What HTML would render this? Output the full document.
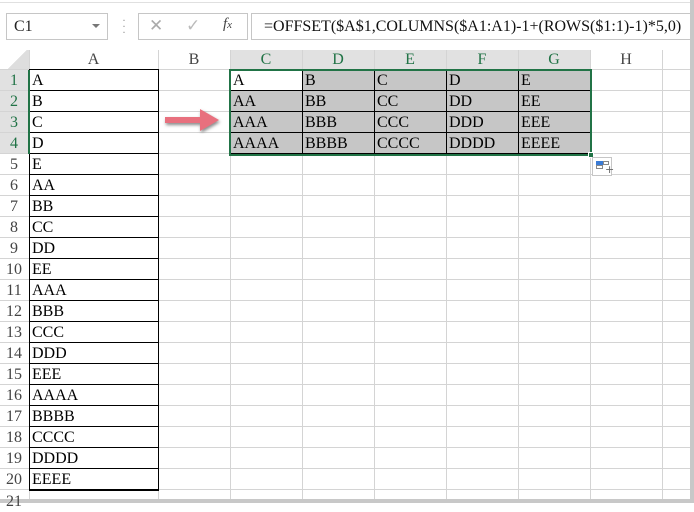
<!DOCTYPE html><html><head><style>
*{margin:0;padding:0;box-sizing:border-box}
body{width:694px;height:503px;background:#fff;position:relative;overflow:hidden;font-family:"Liberation Serif",serif;}
.a{position:absolute}
.v{position:absolute;top:50px;width:1px;height:451px;background:#d4d4d4}
.t{position:absolute;font-size:16px;color:#000;line-height:21px}
.rn{position:absolute;left:0;width:28px;text-align:center;font-size:16px;line-height:21px;color:#444}
.ch{position:absolute;top:50px;height:20px;line-height:20px;text-align:center;font-size:16px;color:#444}
</style></head><body>
<div class="a" style="left:0;top:0;width:694px;height:3px;border-bottom:1px solid #e0e0e0"></div>
<div class="a" style="left:6px;top:13px;width:102px;height:27px;border:1px solid #c6c6c6;font-size:16px;line-height:25px;padding-left:7px;color:#222">C1</div>
<div class="a" style="left:92px;top:24px;border-left:4px solid transparent;border-right:4px solid transparent;border-top:4px solid #777"></div>
<div class="a" style="left:122px;top:17px;color:#999;font-size:12px;line-height:6px">·<br>·<br>·</div>
<div class="a" style="left:138px;top:13px;width:110px;height:27px;border:1px solid #c6c6c6"></div>
<div class="a" style="left:149px;top:16px;color:#aaa;font-size:17px;font-family:'DejaVu Sans'">✕</div>
<div class="a" style="left:186px;top:16px;color:#bbb;font-size:17px;font-family:'DejaVu Sans'">✓</div>
<div class="a" style="left:223px;top:16px;color:#444;font-size:15px;font-style:italic">f<span style="font-size:11px">x</span></div>
<div class="a" style="left:251px;top:13px;width:441px;height:27px;border:1px solid #c6c6c6;font-size:16px;line-height:25px;padding-left:12px;color:#111;white-space:nowrap">=OFFSET($A$1,COLUMNS($A1:A1)-1+(ROWS($1:1)-1)*5,0)</div>
<div class="a" style="left:230px;top:50px;width:361px;height:20px;background:#e1e1e1"></div>
<div class="a" style="left:0;top:70px;width:29px;height:84px;background:#e1e1e1"></div>
<div class="a" style="left:0;top:50px;width:29px;height:20px;background:linear-gradient(135deg,#fff 55%,#dedede 55%)"></div>
<div class="a" style="left:0;top:69px;width:692px;height:432px;background:repeating-linear-gradient(to bottom,#d4d4d4 0,#d4d4d4 1px,transparent 1px,transparent 21px)"></div>
<div class="v" style="left:29px"></div><div class="v" style="left:158px"></div><div class="v" style="left:230px"></div>
<div class="v" style="left:302px"></div><div class="v" style="left:374px"></div><div class="v" style="left:446px"></div>
<div class="v" style="left:518px"></div><div class="v" style="left:590px"></div><div class="v" style="left:662px"></div>
<div class="a" style="left:690px;top:0;width:4px;height:503px;background:#c8c8c8"></div>
<div class="a" style="left:0;top:499px;width:694px;height:4px;background:#c8c8c8"></div>
<div class="ch" style="left:29px;width:129px">A</div>
<div class="ch" style="left:158px;width:72px">B</div>
<div class="ch" style="left:230px;width:72px;color:#217346">C</div>
<div class="ch" style="left:302px;width:72px;color:#217346">D</div>
<div class="ch" style="left:374px;width:72px;color:#217346">E</div>
<div class="ch" style="left:446px;width:72px;color:#217346">F</div>
<div class="ch" style="left:518px;width:72px;color:#217346">G</div>
<div class="ch" style="left:590px;width:72px">H</div>
<div class="a" style="left:29px;top:69px;width:130px;height:422px;border:1px solid #000;background:repeating-linear-gradient(to bottom,transparent 0,transparent 20px,#000 20px,#000 21px)"></div>
<div class="a" style="left:28px;top:70px;width:2px;height:84px;background:#217346"></div>
<div class="a" style="left:230px;top:70px;width:361px;height:85px;background:#c6c6c6"></div>
<div class="a" style="left:231px;top:71px;width:71px;height:19px;background:#fff"></div>
<div class="a" style="left:230px;top:70px;width:361px;height:85px;background:repeating-linear-gradient(to bottom,transparent 0,transparent 20px,#000 20px,#000 21px)"></div>
<div class="a" style="left:302px;top:70px;width:1px;height:85px;background:#000"></div>
<div class="a" style="left:374px;top:70px;width:1px;height:85px;background:#000"></div>
<div class="a" style="left:446px;top:70px;width:1px;height:85px;background:#000"></div>
<div class="a" style="left:518px;top:70px;width:1px;height:85px;background:#000"></div>
<div class="a" style="left:229px;top:69px;width:363px;height:87px;border:2px solid #217346"></div>
<div class="a" style="left:588px;top:152px;width:6px;height:6px;background:#217346;border:1px solid #fff"></div>
<div class="a" style="left:592px;top:157px;width:20px;height:19px;border:1px solid #c6c6c6;background:#fff"></div>
<div class="a" style="left:596px;top:161px;width:7px;height:4px;background:#3a7bd5"></div>
<div class="a" style="left:603px;top:161px;width:6px;height:4px;border:1px solid #888"></div>
<div class="a" style="left:596px;top:165px;width:7px;height:4px;border:1px solid #888"></div>
<div class="a" style="left:605px;top:163px;font-size:11px;color:#666;font-family:'DejaVu Sans'">+</div>
<svg class="a" style="left:160px;top:103px" width="70" height="34"><defs><filter id="s"><feDropShadow dx="1" dy="2" stdDeviation="1.5" flood-color="#888"/></filter></defs><path d="M5 14 H40 V6 L59 17 L40 28 V20 H5 Z" fill="#e8707e" filter="url(#s)"/></svg>
<div class="rn" style="top:70px;color:#217346">1</div><div class="rn" style="top:91px;color:#217346">2</div>
<div class="rn" style="top:112px;color:#217346">3</div><div class="rn" style="top:133px;color:#217346">4</div>
<div class="rn" style="top:154px">5</div><div class="rn" style="top:175px">6</div><div class="rn" style="top:196px">7</div>
<div class="rn" style="top:217px">8</div><div class="rn" style="top:238px">9</div><div class="rn" style="top:259px">10</div>
<div class="rn" style="top:280px">11</div><div class="rn" style="top:301px">12</div><div class="rn" style="top:322px">13</div>
<div class="rn" style="top:343px">14</div><div class="rn" style="top:364px">15</div><div class="rn" style="top:385px">16</div>
<div class="rn" style="top:406px">17</div><div class="rn" style="top:427px">18</div><div class="rn" style="top:448px">19</div>
<div class="rn" style="top:469px">20</div><div class="rn" style="top:491px">21</div>
<div class="t" style="left:32px;top:70px">A</div><div class="t" style="left:32px;top:91px">B</div>
<div class="t" style="left:32px;top:112px">C</div><div class="t" style="left:32px;top:133px">D</div>
<div class="t" style="left:32px;top:154px">E</div><div class="t" style="left:32px;top:175px">AA</div>
<div class="t" style="left:32px;top:196px">BB</div><div class="t" style="left:32px;top:217px">CC</div>
<div class="t" style="left:32px;top:238px">DD</div><div class="t" style="left:32px;top:259px">EE</div>
<div class="t" style="left:32px;top:280px">AAA</div><div class="t" style="left:32px;top:301px">BBB</div>
<div class="t" style="left:32px;top:322px">CCC</div><div class="t" style="left:32px;top:343px">DDD</div>
<div class="t" style="left:32px;top:364px">EEE</div><div class="t" style="left:32px;top:385px">AAAA</div>
<div class="t" style="left:32px;top:406px">BBBB</div><div class="t" style="left:32px;top:427px">CCCC</div>
<div class="t" style="left:32px;top:448px">DDDD</div><div class="t" style="left:32px;top:469px">EEEE</div>
<div class="t" style="left:233px;top:70px">A</div><div class="t" style="left:305px;top:70px">B</div><div class="t" style="left:377px;top:70px">C</div><div class="t" style="left:449px;top:70px">D</div><div class="t" style="left:521px;top:70px">E</div>
<div class="t" style="left:233px;top:91px">AA</div><div class="t" style="left:305px;top:91px">BB</div><div class="t" style="left:377px;top:91px">CC</div><div class="t" style="left:449px;top:91px">DD</div><div class="t" style="left:521px;top:91px">EE</div>
<div class="t" style="left:233px;top:112px">AAA</div><div class="t" style="left:305px;top:112px">BBB</div><div class="t" style="left:377px;top:112px">CCC</div><div class="t" style="left:449px;top:112px">DDD</div><div class="t" style="left:521px;top:112px">EEE</div>
<div class="t" style="left:233px;top:133px">AAAA</div><div class="t" style="left:305px;top:133px">BBBB</div><div class="t" style="left:377px;top:133px">CCCC</div><div class="t" style="left:449px;top:133px">DDDD</div><div class="t" style="left:521px;top:133px">EEEE</div>
</body></html>
